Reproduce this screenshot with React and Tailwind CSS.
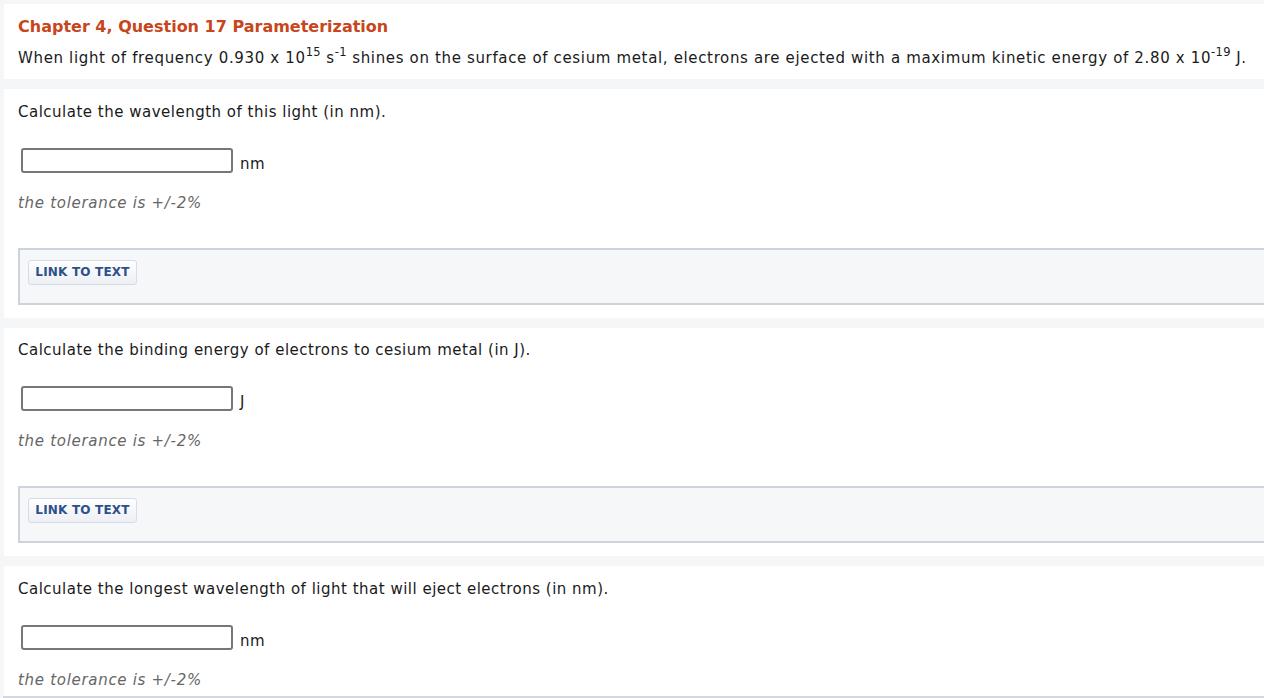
import React from "react";

const font = { fontFamily: '"DejaVu Sans", Verdana, sans-serif' };

function Sup({ children }) {
  return <sup className="text-[11.5px] tracking-[0.3px] top-[-0.62em]">{children}</sup>;
}

function LinkBox() {
  return (
    <div className="mt-[35px] -mr-[10px] h-[57px] border-2 border-[#cdd3dd] bg-[#f6f7f9] pl-[8px] pt-[9px]">
      <button className="h-[25px] w-[109px] rounded-[3px] border border-[#d6dce5] bg-gradient-to-b from-[#ffffff] to-[#eceff4] text-[12px] font-bold tracking-[0.2px] text-[#2d4f8a]">
        LINK TO TEXT
      </button>
    </div>
  );
}

function Question({ text, unit, link, tight, last }) {
  return (
    <div className={`ml-[4px] -mr-[10px] bg-white pl-[14px] ${tight ? "pt-[12px]" : "pt-[13px]"} ${last ? "pb-[6px]" : "pb-[13px]"}`}>
      <div className="h-[20px] text-[15px] leading-[20px] tracking-[0.5px] text-[#1a1a1a]">{text}</div>
      <div className="mt-[26px] flex items-end">
        <div className="ml-[3px] h-[25px] w-[212px] rounded-[3px] border-2 border-[#777777] bg-white" />
        <span className="ml-[7px] text-[15px] leading-[18px] tracking-[0.5px] text-[#1a1a1a]">{unit}</span>
      </div>
      <div className="mt-[20px] h-[20px] text-[15px] italic leading-[20px] tracking-[0.7px] text-[#666666]">
        the tolerance is +/-2%
      </div>
      {link ? <LinkBox /> : null}
    </div>
  );
}

export default function App() {
  return (
    <div style={font} className="h-[698px] w-full overflow-hidden bg-[#f5f6f8] pt-[4px]">
      <div className="ml-[4px] -mr-[10px] h-[75px] bg-white pl-[14px] pt-[13px]">
        <div className="text-[16px] font-bold leading-[20px] text-[#c7461c]">
          Chapter 4, Question 17 Parameterization
        </div>
        <div className="mt-[11px] whitespace-nowrap text-[15px] leading-[20px] tracking-[0.65px] text-[#1a1a1a]">
          When light of frequency 0.930 x 10<Sup>15</Sup> s<Sup>-1</Sup> shines on the surface of cesium metal, electrons are ejected with a maximum kinetic energy of 2.80 x 10<Sup>-19</Sup> J.
        </div>
      </div>
      <div className="mt-[10px]">
        <Question text="Calculate the wavelength of this light (in nm)." unit="nm" link />
      </div>
      <div className="mt-[10px]">
        <Question text="Calculate the binding energy of electrons to cesium metal (in J)." unit="J" link tight />
      </div>
      <div className="mt-[10px]">
        <Question text="Calculate the longest wavelength of light that will eject electrons (in nm)." unit="nm" last />
      </div>
      <div className="ml-[3px] h-[2px] bg-[#d3d8e0]" />
    </div>
  );
}
